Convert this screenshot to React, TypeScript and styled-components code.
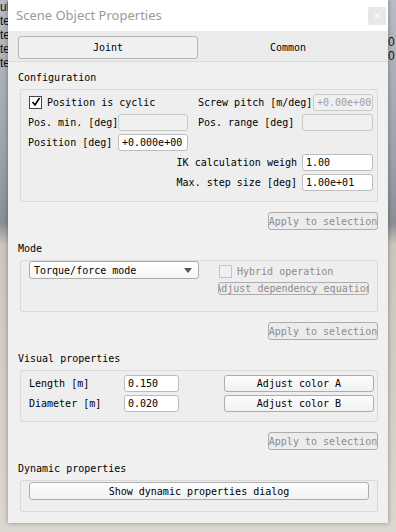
import React from "react";
import styled, { createGlobalStyle } from "styled-components";

const Global = createGlobalStyle`
  html, body {
    margin: 0;
    padding: 0;
  }
  body {
    width: 396px;
    height: 532px;
    overflow: hidden;
    font-family: "DejaVu Sans Mono", "Liberation Mono", monospace;
    font-size: 10px;
    color: #000;
  }
`;

const Page = styled.div`
  display: flex;
  width: 396px;
  height: 532px;
  background: linear-gradient(
    180deg,
    #b9bec6 0%,
    #9da2aa 30%,
    #8a8e95 42%,
    #cbc7bf 46%,
    #dcd8d0 100%
  );
`;

const Strip = styled.div<{ $top: number }>`
  width: 8px;
  flex: none;
  overflow: hidden;
  padding-top: ${(p) => p.$top}px;
  font-family: "Liberation Sans", sans-serif;
  font-size: 12px;
  line-height: 14px;
  color: #111;
  white-space: nowrap;
`;

const Window = styled.div`
  width: 380px;
  height: 523px;
  flex: none;
  background: #f0f0f0;
  box-shadow: 0 0 5px rgba(0, 0, 0, 0.35);
  display: flex;
  flex-direction: column;
`;

const TitleBar = styled.div`
  height: 31px;
  background: #fff;
  display: flex;
  align-items: center;
  padding: 0 2px 0 8px;
`;

const Title = styled.div`
  flex: 1;
  font-family: "Noto Sans", "Liberation Sans", sans-serif;
  font-size: 13px;
  color: #9a9a9a;
  margin-top: -1px;
`;

const CloseBtn = styled.div`
  width: 18px;
  height: 18px;
  background: #e8e8e8;
  color: #fff;
  font-family: "Liberation Sans", sans-serif;
  font-size: 12px;
  display: flex;
  align-items: center;
  justify-content: center;
`;

const TabBar = styled.div`
  height: 31px;
  box-sizing: border-box;
  background: #ebebeb;
  border-bottom: 1px solid #d9d9d9;
  display: flex;
  padding: 5px 10px 0;
`;

const Tab = styled.div<{ $active?: boolean }>`
  flex: 1;
  height: 23px;
  box-sizing: border-box;
  display: flex;
  align-items: center;
  justify-content: center;
  border: 1px solid ${(p) => (p.$active ? "#b4b4b4" : "transparent")};
  border-radius: 3px;
  background: ${(p) => (p.$active ? "#f0f0f0" : "transparent")};
`;

const Body = styled.div`
  padding: 9px 10px 0;
  display: flex;
  flex-direction: column;
`;

const SectionLabel = styled.div<{ $first?: boolean }>`
  height: 14px;
  line-height: 14px;
  margin-top: ${(p) => (p.$first ? 0 : 12)}px;
  margin-bottom: 4px;
`;

const Group = styled.div<{ $pt: number; $h: number }>`
  margin-left: 2px;
  height: ${(p) => p.$h}px;
  box-sizing: border-box;
  border: 1px solid #dadada;
  border-radius: 2px;
  background: #eeeeee;
  padding: ${(p) => p.$pt}px 4px 0 7px;
  display: flex;
  flex-direction: column;
`;

const Row = styled.div`
  height: 20px;
  display: flex;
  align-items: center;
`;

const LeftCell = styled.div`
  width: 170px;
  flex: none;
  display: flex;
  align-items: center;
`;

const RightCell = styled.div<{ $end?: boolean; $gap?: number }>`
  flex: 1;
  min-width: 0;
  display: flex;
  align-items: center;
  justify-content: ${(p) => (p.$end ? "flex-end" : "space-between")};
  gap: ${(p) => p.$gap ?? 5}px;
`;

const Label = styled.span<{ $w?: number }>`
  white-space: nowrap;
  overflow: hidden;
  ${(p) => (p.$w ? `width: ${p.$w}px; flex: none;` : "flex: 1; min-width: 0;")}
`;

const WideLabel = styled.span`
  white-space: nowrap;
  margin-left: -30px;
`;

const Field = styled.div<{ $w: number; $disabled?: boolean }>`
  width: ${(p) => p.$w}px;
  height: 17px;
  flex: none;
  box-sizing: border-box;
  border: 1px solid ${(p) => (p.$disabled ? "#c8c8c8" : "#bdbdbd")};
  border-radius: 3px;
  background: ${(p) => (p.$disabled ? "#f0f0f0" : "#fff")};
  color: ${(p) => (p.$disabled ? "#a0a0a0" : "#000")};
  padding-left: 3px;
  line-height: 15px;
  white-space: nowrap;
  overflow: hidden;
`;

const CheckBox = styled.div<{ $disabled?: boolean }>`
  width: 13px;
  height: 13px;
  flex: none;
  box-sizing: border-box;
  border: 1px solid ${(p) => (p.$disabled ? "#c4c4c4" : "#444")};
  background: ${(p) => (p.$disabled ? "#f0f0f0" : "#fff")};
  margin: 0 5px 0 1px;
  display: flex;
  align-items: center;
  justify-content: center;
`;

const Muted = styled.span`
  color: #8c8c8c;
  white-space: nowrap;
`;

const Button = styled.div<{ $w?: number; $disabled?: boolean; $h?: number }>`
  ${(p) => (p.$w ? `width: ${p.$w}px; flex: none;` : "flex: 1;")}
  height: ${(p) => p.$h ?? 17}px;
  box-sizing: border-box;
  border: 1px solid #adadad;
  border-radius: 3px;
  background: ${(p) =>
    p.$disabled ? "#ececec" : "linear-gradient(180deg, #fdfdfd 0%, #f1f1f1 100%)"};
  color: ${(p) => (p.$disabled ? "#8c8c8c" : "#000")};
  display: flex;
  align-items: center;
  justify-content: center;
  white-space: nowrap;
  overflow: hidden;
`;

const ApplyRow = styled.div`
  display: flex;
  justify-content: flex-end;
  margin-top: 10px;
`;

const Combo = styled.div`
  width: 170px;
  height: 18px;
  flex: none;
  box-sizing: border-box;
  border: 1px solid #acacac;
  border-radius: 3px;
  background: linear-gradient(180deg, #ffffff 0%, #f6f6f6 100%);
  display: flex;
  align-items: center;
  padding: 0 6px 0 4px;
  margin-left: 1px;
`;

const ComboText = styled.span`
  flex: 1;
`;

const ModeRow = styled.div`
  display: flex;
  gap: 19px;
`;

const ModeRight = styled.div`
  width: 151px;
  display: flex;
  flex-direction: column;
  gap: 1px;
`;

const VisualRow = styled.div<{ $h?: number }>`
  height: ${(p) => p.$h ?? 20}px;
  display: flex;
  align-items: center;
  padding-left: 1px;
`;

const Apply = () => (
  <ApplyRow>
    <Button $w={110} $h={18} $disabled>
      Apply to selection
    </Button>
  </ApplyRow>
);

export default function App() {
  return (
    <>
      <Global />
      <Page>
        <Strip $top={-6}>
          <div>ub</div>
          <div>te</div>
          <div>te</div>
          <div>te</div>
          <div>te</div>
        </Strip>
        <Window>
          <TitleBar>
            <Title>Scene Object Properties</Title>
            <CloseBtn>×</CloseBtn>
          </TitleBar>
          <TabBar>
            <Tab $active>Joint</Tab>
            <Tab>Common</Tab>
          </TabBar>
          <Body>
            <SectionLabel $first>Configuration</SectionLabel>
            <Group $pt={2} $h={113}>
              <Row>
                <LeftCell>
                  <CheckBox>
                    <svg width="10" height="10" viewBox="0 0 10 10">
                      <path d="M1.5 5 L4 8 L8.5 1" fill="none" stroke="#000" strokeWidth="1.6" />
                    </svg>
                  </CheckBox>
                  <span>Position is cyclic</span>
                </LeftCell>
                <RightCell $gap={0}>
                  <Label>Screw pitch [m/deg]</Label>
                  <Field $w={60} $disabled>
                    +0.00e+00
                  </Field>
                </RightCell>
              </Row>
              <Row>
                <LeftCell>
                  <Label $w={90}>Pos. min. [deg]</Label>
                  <Field $w={70} $disabled />
                </LeftCell>
                <RightCell>
                  <Label>Pos. range [deg]</Label>
                  <Field $w={71} $disabled />
                </RightCell>
              </Row>
              <Row>
                <LeftCell>
                  <Label $w={90}>Position [deg]</Label>
                  <Field $w={70}>+0.000e+00</Field>
                </LeftCell>
              </Row>
              <Row>
                <LeftCell />
                <RightCell $end>
                  <WideLabel>IK calculation weigh</WideLabel>
                  <Field $w={71}>1.00</Field>
                </RightCell>
              </Row>
              <Row>
                <LeftCell />
                <RightCell $end>
                  <WideLabel>Max. step size [deg]</WideLabel>
                  <Field $w={71}>1.00e+01</Field>
                </RightCell>
              </Row>
            </Group>
            <Apply />

            <SectionLabel>Mode</SectionLabel>
            <Group $pt={0} $h={52}>
              <ModeRow>
                <Combo>
                  <ComboText>Torque/force mode</ComboText>
                  <svg width="8" height="5" viewBox="0 0 8 5">
                    <path d="M0 0 H8 L4 5 Z" fill="#555" />
                  </svg>
                </Combo>
                <ModeRight>
                  <Row>
                    <CheckBox $disabled />
                    <Muted>Hybrid operation</Muted>
                  </Row>
                  <Button $disabled>Adjust dependency equation</Button>
                </ModeRight>
              </ModeRow>
            </Group>
            <Apply />

            <SectionLabel>Visual properties</SectionLabel>
            <Group $pt={2} $h={52}>
              <VisualRow>
                <Label $w={95}>Length [m]</Label>
                <Field $w={55}>0.150</Field>
                <Label $w={45} />
                <Button $w={150}>Adjust color A</Button>
              </VisualRow>
              <VisualRow>
                <Label $w={95}>Diameter [m]</Label>
                <Field $w={55}>0.020</Field>
                <Label $w={45} />
                <Button $w={150}>Adjust color B</Button>
              </VisualRow>
            </Group>
            <Apply />

            <SectionLabel>Dynamic properties</SectionLabel>
            <Group $pt={1} $h={32}>
              <VisualRow $h={18}>
                <Button $w={340} $h={18}>
                  Show dynamic properties dialog
                </Button>
              </VisualRow>
            </Group>
          </Body>
        </Window>
        <Strip $top={35}>
          <div>0</div>
          <div>0</div>
        </Strip>
      </Page>
    </>
  );
}
